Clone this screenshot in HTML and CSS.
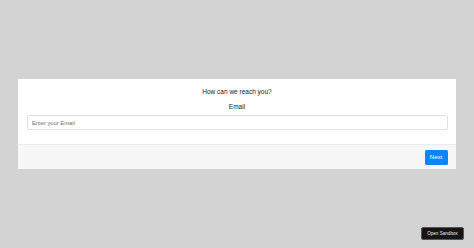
FILE: index.html
```html
<!DOCTYPE html>
<html>
<head>
<meta charset="utf-8">
<link rel="stylesheet" href="styles.css">
</head>
<body>
<div class="page">
  <div class="card">
    <div class="card-body">
      <div class="title">How can we reach you?</div>
      <label class="label" for="email">Email</label>
      <input id="email" class="input" type="text" placeholder="Enter your Email">
    </div>
    <div class="card-footer">
      <button class="btn">Next</button>
    </div>
  </div>
</div>
<div class="sandbox">Open Sandbox</div>
</body>
</html>
```
FILE: styles.css
```css
html, body {
  margin: 0;
  padding: 0;
}
body {
  width: 474px;
  height: 248px;
  background: #d3d3d3;
  font-family: "Liberation Sans", Arial, sans-serif;
  color: #222;
  overflow: hidden;
}
.page {
  padding: 79px 18px 0 18px;
}
.card {
  background: #fff;
  display: flex;
  flex-direction: column;
  height: 90px;
}
.card-body {
  padding: 8px 8.5px 0 8.5px;
  display: flex;
  flex-direction: column;
  align-items: center;
  height: 65px;
  box-sizing: border-box;
  flex: none;
}
.title {
  font-size: 6.5px;
  line-height: 9.6px;
}
.label {
  margin-top: 5.6px;
  font-size: 6.5px;
  line-height: 9.6px;
}
.input {
  margin-top: 3.5px;
  align-self: stretch;
  box-sizing: border-box;
  height: 14.6px;
  border: 0.6px solid #e2e2e2;
  border-radius: 2px;
  padding: 0 4.5px;
  font-family: "Liberation Sans", Arial, sans-serif;
  font-size: 5.8px;
  color: #333;
  outline: none;
}
.input::placeholder {
  color: #6f6f6f;
}
.card-footer {
  flex: 1;
  background: #f7f7f7;
  border-top: 0.5px solid #ececec;
  display: flex;
  justify-content: flex-end;
  align-items: center;
  padding: 0 8.5px;
}
.btn {
  background: #0d84fb;
  color: #fff;
  border: none;
  border-radius: 1.5px;
  width: 23px;
  height: 15px;
  padding: 0;
  font-family: "Liberation Sans", Arial, sans-serif;
  font-size: 6px;
}
.sandbox {
  position: absolute;
  left: 421px;
  top: 227px;
  width: 43px;
  height: 13px;
  background: #151515;
  color: #eee;
  border-radius: 2px;
  font-size: 4.6px;
  display: flex;
  align-items: center;
  justify-content: center;
  border: 0.5px solid #555;
  box-sizing: border-box;
}
```
